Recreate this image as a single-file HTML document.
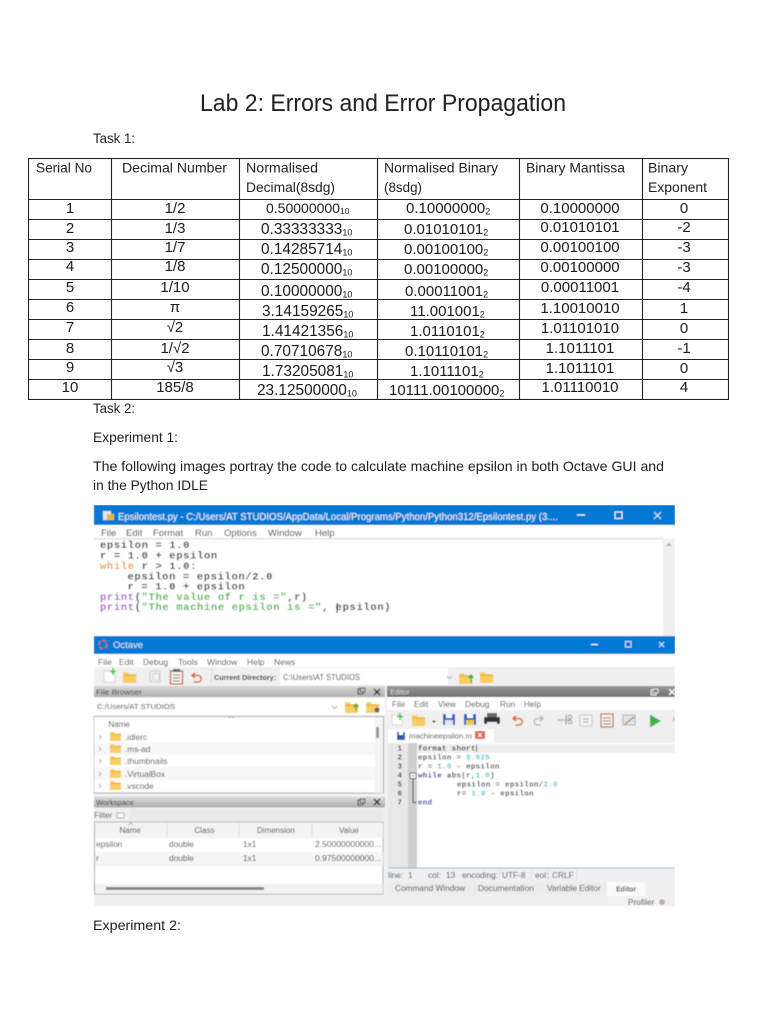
<!DOCTYPE html>
<html lang="en"><head><meta charset="utf-8"><title>Lab 2: Errors and Error Propagation</title>
<style>
html,body{margin:0;padding:0;background:#fff;width:768px;height:1024px;overflow:hidden}
svg{display:block}
text{font-family:"Liberation Sans",sans-serif;white-space:pre}
.b{fill:#222;font-size:14px}
.t{fill:#1c1c1c;font-size:15px}
.m{font-family:"Liberation Mono",monospace}
.i{font-family:"Liberation Mono",monospace;font-size:10.5px;letter-spacing:.63px;fill:#444;font-weight:bold}
.e{font-family:"Liberation Mono",monospace;font-size:7.4px;letter-spacing:.37px;fill:#444;font-weight:bold}
.u{font-size:8px;fill:#444}
.s{font-size:8.3px;fill:#444}
.cm{text-anchor:middle}
</style></head><body>
<svg width="768" height="1024" viewBox="0 0 768 1024" xmlns="http://www.w3.org/2000/svg">
<defs>
<filter id="bl" x="0" y="0" width="1" height="1"><feGaussianBlur stdDeviation="0.4"/></filter>
<filter id="bt" x="0" y="0" width="1" height="1"><feGaussianBlur stdDeviation="0.2"/></filter>
<linearGradient id="g1" x1="0" y1="0" x2="0" y2="1"><stop offset="0" stop-color="#d8d8d8"/><stop offset="1" stop-color="#adadad"/></linearGradient>
<linearGradient id="g2" x1="0" y1="0" x2="0" y2="1"><stop offset="0" stop-color="#999"/><stop offset="1" stop-color="#707070"/></linearGradient>
<g id="fold"><path d="M0 1h4l1 1.5h6v7.5H0z" fill="#f9cd5e"/><path d="M0 3.5h11" stroke="#e9ad36" stroke-width="1"/></g>
</defs>

<text x="200" y="111" style="font-size:24px" fill="#222" textLength="366" lengthAdjust="spacingAndGlyphs">Lab 2: Errors and Error Propagation</text>
<text class="b" x="93" y="143" textLength="42" lengthAdjust="spacingAndGlyphs">Task 1:</text>

<g filter="url(#bt)">
<g stroke="#222" stroke-width="1.1" fill="none">
<rect x="28.5" y="158.5" width="700" height="241"/>
<path d="M28 199.5H729M28 219.5H729M28 239.5H729M28 259.5H729M28 279.5H729M28 299.5H729M28 319.5H729M28 339.5H729M28 359.5H729M28 379.5H729"/>
<path d="M111.5 158V400M239.5 158V400M377.5 158V400M519.5 158V400M642.5 158V400"/>
</g>
<g>
<text class="b" x="36" y="172.5" textLength="56" lengthAdjust="spacingAndGlyphs">Serial No</text>
<text class="b" x="122" y="172.5" textLength="105" lengthAdjust="spacingAndGlyphs">Decimal Number</text>
<text class="b" x="246" y="172.5" textLength="72" lengthAdjust="spacingAndGlyphs">Normalised</text>
<text class="b" x="246" y="192" textLength="89" lengthAdjust="spacingAndGlyphs">Decimal(8sdg)</text>
<text class="b" x="384" y="172.5" textLength="114" lengthAdjust="spacingAndGlyphs">Normalised Binary</text>
<text class="b" x="384" y="192" textLength="38" lengthAdjust="spacingAndGlyphs">(8sdg)</text>
<text class="b" x="526" y="172.5" textLength="99" lengthAdjust="spacingAndGlyphs">Binary Mantissa</text>
<text class="b" x="648" y="172.5" textLength="40" lengthAdjust="spacingAndGlyphs">Binary</text>
<text class="b" x="648" y="192" textLength="59" lengthAdjust="spacingAndGlyphs">Exponent</text>
</g>

<!-- col 1 and 2 -->
<text class="t cm" x="70" y="213">1</text><text class="t cm" x="175" y="213">1/2</text>
<text class="t cm" x="70" y="233">2</text><text class="t cm" x="175" y="233">1/3</text>
<text class="t cm" x="70" y="252">3</text><text class="t cm" x="175" y="252">1/7</text>
<text class="t cm" x="70" y="271">4</text><text class="t cm" x="175" y="271">1/8</text>
<text class="t cm" x="70" y="292">5</text><text class="t cm" x="175" y="292">1/10</text>
<text class="t cm" x="70" y="312">6</text><text class="t cm" x="175" y="312">π</text>
<text class="t cm" x="70" y="332">7</text><text class="t cm" x="175" y="332">√2</text>
<text class="t cm" x="70" y="353">8</text><text class="t cm" x="175" y="353">1/√2</text>
<text class="t cm" x="70" y="372">9</text><text class="t cm" x="175" y="372">√3</text>
<text class="t cm" x="70" y="392">10</text><text class="t cm" x="175" y="392">185/8</text>

<!-- col 3 -->
<text class="t" x="266" y="213" style="font-size:14px">0.50000000<tspan font-size="8.5" dy="1">10</tspan></text>
<text class="t" x="261" y="234" style="font-size:15.4px">0.33333333<tspan font-size="9" dy="1.5">10</tspan></text>
<text class="t" x="261" y="254" style="font-size:15.4px">0.14285714<tspan font-size="9" dy="1.5">10</tspan></text>
<text class="t" x="261" y="274" style="font-size:15.4px">0.12500000<tspan font-size="9" dy="1.5">10</tspan></text>
<text class="t" x="261" y="296" style="font-size:15.4px">0.10000000<tspan font-size="9" dy="1.5">10</tspan></text>
<text class="t" x="262" y="316" style="font-size:15.4px">3.14159265<tspan font-size="9" dy="1.5">10</tspan></text>
<text class="t" x="262" y="336" style="font-size:15.4px">1.41421356<tspan font-size="9" dy="1.5">10</tspan></text>
<text class="t" x="261" y="356" style="font-size:15.4px">0.70710678<tspan font-size="9" dy="1.5">10</tspan></text>
<text class="t" x="262" y="376" style="font-size:15.4px">1.73205081<tspan font-size="9" dy="1.5">10</tspan></text>
<text class="t" x="257" y="395" style="font-size:15.4px">23.12500000<tspan font-size="9" dy="1.5">10</tspan></text>

<!-- col 4 -->
<text class="t" x="406" y="213">0.10000000<tspan font-size="9" dy="1.5">2</tspan></text>
<text class="t" x="404" y="234">0.01010101<tspan font-size="9" dy="1.5">2</tspan></text>
<text class="t" x="404" y="254">0.00100100<tspan font-size="9" dy="1.5">2</tspan></text>
<text class="t" x="404" y="274">0.00100000<tspan font-size="9" dy="1.5">2</tspan></text>
<text class="t" x="405" y="296">0.00011001<tspan font-size="9" dy="1.5">2</tspan></text>
<text class="t" x="410" y="316">11.001001<tspan font-size="9" dy="1.5">2</tspan></text>
<text class="t" x="410" y="336">1.0110101<tspan font-size="9" dy="1.5">2</tspan></text>
<text class="t" x="405" y="356">0.10110101<tspan font-size="9" dy="1.5">2</tspan></text>
<text class="t" x="410" y="376">1.1011101<tspan font-size="9" dy="1.5">2</tspan></text>
<text class="t" x="389" y="395">10111.00100000<tspan font-size="9" dy="1.5">2</tspan></text>

<!-- col 5 and 6 -->
<text class="t cm" x="580" y="213">0.10000000</text><text class="t cm" x="684" y="213">0</text>
<text class="t cm" x="580" y="232">0.01010101</text><text class="t cm" x="684" y="232">-2</text>
<text class="t cm" x="580" y="252">0.00100100</text><text class="t cm" x="684" y="252">-3</text>
<text class="t cm" x="580" y="272">0.00100000</text><text class="t cm" x="684" y="272">-3</text>
<text class="t cm" x="580" y="292">0.00011001</text><text class="t cm" x="684" y="292">-4</text>
<text class="t cm" x="580" y="313">1.10010010</text><text class="t cm" x="684" y="313">1</text>
<text class="t cm" x="580" y="333">1.01101010</text><text class="t cm" x="684" y="333">0</text>
<text class="t cm" x="580" y="353">1.1011101</text><text class="t cm" x="684" y="353">-1</text>
<text class="t cm" x="580" y="373">1.1011101</text><text class="t cm" x="684" y="373">0</text>
<text class="t cm" x="580" y="392">1.01110010</text><text class="t cm" x="684" y="392">4</text>
</g>

<text class="b" x="93" y="413" textLength="42" lengthAdjust="spacingAndGlyphs">Task 2:</text>
<text class="b" x="93" y="442" textLength="85" lengthAdjust="spacingAndGlyphs">Experiment 1:</text>
<text class="b" x="93" y="471" textLength="571" lengthAdjust="spacingAndGlyphs">The following images portray the code to calculate machine epsilon in both Octave GUI and</text>
<text class="b" x="93" y="490" textLength="115" lengthAdjust="spacingAndGlyphs">in the Python IDLE</text>
<text class="b" x="93" y="930" textLength="88" lengthAdjust="spacingAndGlyphs">Experiment 2:</text>

<!-- SCREENSHOT -->
<g filter="url(#bl)">
<!-- IDLE -->
<rect x="94" y="505" width="581" height="20" fill="#0078d4"/>
<rect x="94" y="525" width="581" height="111" fill="#fff"/>
<rect x="94" y="538" width="569" height="1.4" fill="#ddd"/>
<rect x="663" y="539" width="12" height="97" fill="#f0f0f0"/>
<path d="M666 546l3-3 3 3z" fill="#aaa"/>
<rect x="103" y="511" width="8" height="9" fill="#dfe7ee"/><rect x="107" y="514" width="7" height="6" fill="#e8b83f"/>
<text x="118" y="520" fill="#f2f8fd" style="font-size:10.5px" textLength="440" lengthAdjust="spacingAndGlyphs">Epsilontest.py - C:/Users/AT STUDIOS/AppData/Local/Programs/Python/Python312/Epsilontest.py (3....</text>
<path d="M577 515h8" stroke="#fff" stroke-width="1.2"/>
<rect x="615" y="512" width="7" height="6.5" fill="none" stroke="#fff"/>
<path d="M654 512l7 7M661 512l-7 7" stroke="#dbeaf7" stroke-width="1"/>
<text x="101" y="536" fill="#333" style="font-size:9.5px">File</text><text x="126" y="536" fill="#333" style="font-size:9.5px">Edit</text><text x="153" y="536" fill="#333" style="font-size:9.5px">Format</text><text x="195" y="536" fill="#333" style="font-size:9.5px">Run</text><text x="224" y="536" fill="#333" style="font-size:9.5px">Options</text><text x="268" y="536" fill="#333" style="font-size:9.5px">Window</text><text x="315" y="536" fill="#333" style="font-size:9.5px">Help</text>
<text class="i" x="100" y="548">epsilon = 1.0</text>
<text class="i" x="100" y="558.5">r = 1.0 + epsilon</text>
<text class="i" x="100" y="569"><tspan fill="#f0a050">while</tspan> r &gt; 1.0:</text>
<text class="i" x="127.5" y="579.5">epsilon = epsilon/2.0</text>
<text class="i" x="127.5" y="589.5">r = 1.0 + epsilon</text>
<text class="i" x="100" y="600"><tspan fill="#b060c8">print</tspan>(<tspan fill="#50b850">"The value of r is ="</tspan>,r)</text>
<text class="i" x="100" y="610"><tspan fill="#b060c8">print</tspan>(<tspan fill="#50b850">"The machine epsilon is ="</tspan>, epsilon)</text>
<rect x="336.5" y="603" width="1.2" height="10" fill="#222"/>

<!-- Octave -->
<rect x="94" y="636" width="581" height="18" fill="#0078d4"/>
<rect x="94" y="654" width="581" height="13" fill="#fff"/>
<rect x="94" y="667" width="581" height="239" fill="#f0f0f0"/>
<circle cx="103" cy="644.5" r="4" fill="none" stroke="#d86a30" stroke-width="1.6" stroke-dasharray="4 2"/>
<text x="113" y="648" fill="#dcecf8" style="font-size:9.5px">Octave</text>
<path d="M591 644.5h7" stroke="#fff" stroke-width="1.2"/>
<rect x="625.5" y="641.5" width="5.5" height="5.5" fill="none" stroke="#cfe4f5"/>
<path d="M659 642l5 5M664 642l-5 5" stroke="#dbeaf7"/>
<text x="98" y="665" fill="#444" style="font-size:8.5px">File</text><text x="119" y="665" fill="#444" style="font-size:8.5px">Edit</text><text x="143" y="665" fill="#444" style="font-size:8.5px">Debug</text><text x="178" y="665" fill="#444" style="font-size:8.5px">Tools</text><text x="207" y="665" fill="#444" style="font-size:8.5px">Window</text><text x="247" y="665" fill="#444" style="font-size:8.5px">Help</text><text x="274" y="665" fill="#444" style="font-size:8.5px">News</text>
<!-- toolbar -->
<path d="M104 671h8l3 3v8h-11z" fill="#fff" stroke="#ccc" stroke-width=".7"/><path d="M113 668v7M110 671.5h6" stroke="#36c24a" stroke-width="1.6"/>
<use href="#fold" transform="translate(123 671)scale(1.2)"/>
<rect x="150" y="671" width="10" height="11" fill="#eee" stroke="#ccc"/><rect x="153" y="674" width="6" height="6" fill="#f5f5f5" stroke="#ccc" stroke-width=".7"/>
<rect x="170.5" y="671" width="12" height="13" fill="#f7f3ec" stroke="#b8703a" stroke-width="1.3"/><path d="M173 675h7M173 678h7M173 681h7" stroke="#777"/><rect x="173" y="669" width="7" height="3" fill="#666"/>
<path d="M195 673l-3 2.5 3 2.5M192.500 675.500h6a3.300 3.300 0 0 1 0 6.500h-5" fill="none" stroke="#e2622b" stroke-width="1.5"/>
<rect x="211" y="668" width="1" height="16" fill="#ddd"/>
<text x="214" y="680" fill="#333" font-weight="bold" style="font-size:7.5px" textLength="62" lengthAdjust="spacingAndGlyphs">Current Directory:</text>
<rect x="280" y="668" width="168" height="17" fill="#fff"/>
<text x="283" y="680" fill="#333" style="font-size:8px" textLength="77" lengthAdjust="spacingAndGlyphs">C:\Users\AT STUDIOS</text>
<path d="M447 676l2.500 2.500 2.500-2.500" fill="none" stroke="#aaa"/>
<use href="#fold" transform="translate(459 672)scale(1.2)"/><path d="M471 683v-7M468.500 678l2.500-3 2.500 3" stroke="#3ab54a" stroke-width="1.4" fill="#3ab54a"/>
<use href="#fold" transform="translate(480 671)scale(1.2)"/>

<!-- File browser panel -->
<rect x="94" y="686" width="291" height="11" fill="url(#g1)"/>
<text x="96" y="694.500" fill="#333" style="font-size:7.5px" textLength="46" lengthAdjust="spacingAndGlyphs">File Browser</text>
<rect x="358" y="689" width="5" height="5" fill="none" stroke="#444"/><rect x="360" y="688" width="5" height="4" fill="#bbb" stroke="#444" stroke-width=".8"/>
<path d="M374 689l6 6M380 689l-6 6" stroke="#222" stroke-width="1.300"/>
<rect x="94" y="698" width="291" height="17" fill="#fff"/>
<text x="97" y="709" fill="#333" style="font-size:7.5px" textLength="78" lengthAdjust="spacingAndGlyphs">C:/Users/AT STUDIOS</text>
<path d="M332 706l2.500 2.500 2.500-2.500" fill="none" stroke="#aaa"/>
<use href="#fold" transform="translate(345 701)scale(1.2)"/><path d="M356 711v-7M353.500 707l2.500-3 2.500 3" stroke="#3ab54a" stroke-width="1.300" fill="#3ab54a"/>
<use href="#fold" transform="translate(366 701)scale(1.200)"/><circle cx="377" cy="710" r="2.500" fill="#667"/>
<rect x="93.500" y="716.500" width="290" height="76.500" fill="#fff" stroke="#aaa"/>
<rect x="94" y="743" width="281" height="12" fill="#f7f7f7"/><rect x="94" y="767" width="281" height="13" fill="#f7f7f7"/>
<rect x="375" y="717" width="8" height="76" fill="#f4f4f4"/>
<rect x="376" y="727" width="3" height="11" fill="#999"/>
<path d="M229 718l2.500-2 2.500 2" fill="none" stroke="#aaa"/>
<text x="108.500" y="727" class="u">Name</text>
<g fill="none" stroke="#999" stroke-width=".8"><path d="M99 735l2 2-2 2M99 747l2 2-2 2M99 759l2 2-2 2M99 772l2 2-2 2M99 784l2 2-2 2"/></g>
<use href="#fold" transform="translate(110 731)"/><use href="#fold" transform="translate(110 743)"/><use href="#fold" transform="translate(110 755)"/><use href="#fold" transform="translate(110 768)"/><use href="#fold" transform="translate(110 780)"/>
<text x="125" y="740" class="s">.idlerc</text><text x="125" y="752" class="s">.ms-ad</text><text x="125" y="764" class="s">.thumbnails</text><text x="125" y="777" class="s">.VirtualBox</text><text x="125" y="789" class="s">.vscode</text>

<!-- Workspace -->
<rect x="94" y="797" width="291" height="10.500" fill="url(#g1)"/>
<text x="96" y="805" fill="#333" style="font-size:7.500px" textLength="38" lengthAdjust="spacingAndGlyphs">Workspace</text>
<rect x="358" y="800" width="5" height="5" fill="none" stroke="#444"/><rect x="360" y="799" width="5" height="4" fill="#bbb" stroke="#444" stroke-width=".8"/>
<path d="M374 799l6 6M380 799l-6 6" stroke="#222" stroke-width="1.300"/>
<text x="94" y="818" class="s">Filter</text>
<rect x="117" y="813" width="7" height="5" fill="#fff" stroke="#888" stroke-width=".7"/>
<rect x="130" y="809" width="253" height="11" fill="#e9e9e9"/>
<rect x="94.500" y="822" width="288.500" height="72" fill="#fff" stroke="#aaa"/>
<rect x="95" y="823" width="288" height="15" fill="#f3f3f3"/>
<rect x="95" y="852" width="288" height="14" fill="#f5f5f5"/>
<rect x="95" y="884" width="288" height="9" fill="#f2f2f2"/>
<path d="M167 823v14M239 823v14M312 823v14" stroke="#ddd"/>
<path d="M128 825l2.500-2 2.500 2" fill="none" stroke="#aaa"/>
<text x="119.500" y="833" class="u">Name</text><text x="194.500" y="833" class="u">Class</text><text x="257" y="833" class="u">Dimension</text><text x="339" y="833" class="u">Value</text>
<text x="96" y="847" class="s">epsilon</text><text x="169" y="847" class="s">double</text><text x="243" y="847" class="s">1x1</text><text x="315" y="847" class="s" textLength="66" lengthAdjust="spacingAndGlyphs">2.50000000000...</text>
<text x="96" y="861" class="s">r</text><text x="169" y="861" class="s">double</text><text x="243" y="861" class="s">1x1</text><text x="315" y="861" class="s" textLength="66" lengthAdjust="spacingAndGlyphs">0.97500000000...</text>
<rect x="106" y="887" width="158" height="3" fill="#888"/>

<!-- Editor panel -->
<rect x="387" y="686" width="288" height="11" fill="url(#g2)"/>
<text x="390" y="694.500" fill="#ddd" style="font-size:7.500px">Editor</text>
<rect x="651" y="690" width="5" height="5" fill="none" stroke="#eee"/><rect x="653" y="689" width="5" height="4" fill="#888" stroke="#eee" stroke-width=".8"/>
<path d="M669 689l6 6M675 689l-6 6" stroke="#fff" stroke-width="1.300"/>
<rect x="387" y="697" width="288" height="13" fill="#fff"/>
<text x="392" y="707" class="s">File</text><text x="414" y="707" class="s">Edit</text><text x="438" y="707" class="s">View</text><text x="465" y="707" class="s">Debug</text><text x="500" y="707" class="s">Run</text><text x="524" y="707" class="s">Help</text>
<!-- editor toolbar -->
<path d="M392 715h7l3 3v7h-10z" fill="#fff" stroke="#ccc" stroke-width=".7"/><path d="M400 713v7M397 716.500h6" stroke="#36c24a" stroke-width="1.500"/>
<use href="#fold" transform="translate(412 714)scale(1.200)"/>
<path d="M432 720.500h4l-2 2.500z" fill="#222"/>
<rect x="443" y="714" width="12" height="11" fill="#2a62c0"/><rect x="446" y="714" width="6" height="4" fill="#fff"/><rect x="445" y="720" width="8" height="5" fill="#dfe8f5"/>
<rect x="464" y="714" width="12" height="11" fill="#2a62c0"/><rect x="467" y="714" width="6" height="4" fill="#fff"/><rect x="466" y="720" width="8" height="5" fill="#f0c94a"/>
<rect x="484" y="717" width="16" height="7" rx="1" fill="#333"/><rect x="487" y="713" width="10" height="4" fill="#666"/><rect x="487" y="722" width="10" height="4" fill="#eee"/>
<path d="M516 716l-3 2.500 3 2.500M513.500 718.500h6a3.300 3.300 0 0 1 0 6.500h-4" fill="none" stroke="#e2622b" stroke-width="1.500"/>
<path d="M540 716l3 2.500-3 2.500M543 718.500h-6a3.300 3.300 0 0 0 0 6.500h4" fill="none" stroke="#bbb" stroke-width="1.500"/>
<path d="M558 720h13M566 714v11" stroke="#aaa" stroke-width="1.200"/><circle cx="570" cy="717" r="1.800" fill="none" stroke="#999"/><circle cx="570" cy="722" r="1.800" fill="none" stroke="#999"/>
<rect x="580" y="715" width="12" height="11" fill="#f4f4f4" stroke="#ccc"/><path d="M583 719h6M583 722h6" stroke="#aaa"/>
<rect x="601" y="714" width="12" height="13" fill="#f7f3ec" stroke="#b8703a" stroke-width="1.200"/><path d="M603 718h8M603 721h8M603 724h8" stroke="#777"/>
<rect x="623" y="715" width="12" height="10" fill="#dfe6ee" stroke="#99a" stroke-width=".8"/><path d="M625 724l9-7" stroke="#c87a3a" stroke-width="1.400"/>
<path d="M650 714.500l11 6.500-11 6.500z" fill="#3cb54a"/>
<path d="M673 717l1.500 2-1.500 2" fill="none" stroke="#aaa"/>
<!-- tab -->
<rect x="387" y="728" width="288" height="15" fill="#eee"/>
<rect x="388" y="729" width="106" height="14" fill="#fff"/>
<rect x="397" y="732" width="8" height="8" fill="#3058b0"/><rect x="399" y="732" width="4" height="3" fill="#fff"/>
<text x="409" y="738.500" fill="#333" style="font-size:7.500px" textLength="63" lengthAdjust="spacingAndGlyphs">machineepsilon.m</text>
<rect x="475" y="731" width="10" height="8" fill="#e0654a"/><path d="M478 733l4 4M482 733l-4 4" stroke="#fff"/>
<!-- code area -->
<rect x="388" y="743" width="287" height="125" fill="#fff"/>
<rect x="388" y="743" width="20" height="125" fill="#e8e8e8"/>
<rect x="408" y="743" width="9" height="125" fill="#cfcfcf"/>
<rect x="417" y="744" width="258" height="9" fill="#eee"/>
<g font-weight="bold">
<text class="m" x="402" y="750.500" style="font-size:7.500px" text-anchor="end" fill="#444">1</text>
<text class="m" x="402" y="759.500" style="font-size:7.500px" text-anchor="end" fill="#444">2</text>
<text class="m" x="402" y="768.500" style="font-size:7.500px" text-anchor="end" fill="#444">3</text>
<text class="m" x="402" y="777.500" style="font-size:7.500px" text-anchor="end" fill="#444">4</text>
<text class="m" x="402" y="786.500" style="font-size:7.500px" text-anchor="end" fill="#444">5</text>
<text class="m" x="402" y="795.500" style="font-size:7.500px" text-anchor="end" fill="#444">6</text>
<text class="m" x="402" y="804.500" style="font-size:7.500px" text-anchor="end" fill="#444">7</text>
</g>
<rect x="410" y="773" width="6" height="5.500" fill="#fff" stroke="#444" stroke-width=".8"/><path d="M411.500 775.800h3" stroke="#444" stroke-width=".7"/>
<path d="M413 779v23.500h4" fill="none" stroke="#222" stroke-width="1"/>
<text class="e" x="418" y="750.500">format short</text>
<text class="e" x="418" y="759.500">epsilon = <tspan fill="#5cc0d0">0.025</tspan></text>
<text class="e" x="418" y="768.500">r = <tspan fill="#5cc0d0">1.0</tspan> - epsilon</text>
<text class="e" x="418" y="777.500"><tspan fill="#1c2a8c">while</tspan> abs(r,<tspan fill="#5cc0d0">1.0</tspan>)</text>
<text class="e" x="457" y="786.500">epsilon = epsilon/<tspan fill="#5cc0d0">2.0</tspan></text>
<text class="e" x="457" y="795.500">r= <tspan fill="#5cc0d0">1.0</tspan> - epsilon</text>
<text class="e" x="418" y="804.500" style="fill:#1c2a8c">end</text>
<rect x="476" y="745" width="1" height="7" fill="#222"/>
<!-- status -->
<rect x="388" y="867.500" width="287" height="1" fill="#7ab5e0"/>
<text x="388" y="878" class="s">line:</text><text x="408" y="878" class="s">1</text><text x="428" y="878" class="s">col:</text><text x="446" y="878" class="s">13</text><text x="462" y="878" class="s">encoding:</text><text x="502" y="878" class="s">UTF-8</text><text x="535" y="878" class="s">eol:</text><text x="552" y="878" class="s">CRLF</text>
<path d="M499.500 870v10M531 870v10M548.500 870v10M577 870v10" stroke="#ddd"/>
<!-- bottom tabs -->
<rect x="387" y="882" width="221" height="13" fill="#ececec"/>
<rect x="607" y="882" width="38" height="14" fill="#fafafa"/>
<text x="395" y="891" class="s">Command Window</text><text x="478" y="891" class="s">Documentation</text><text x="547" y="891" class="s">Variable Editor</text><text x="616" y="891.500" class="s" font-weight="bold" style="font-size:7px">Editor</text>
<text x="628" y="905" class="s">Profiler</text>
<circle cx="662" cy="902" r="3" fill="#c8a8b0"/>
</g>
</svg>
</body></html>
